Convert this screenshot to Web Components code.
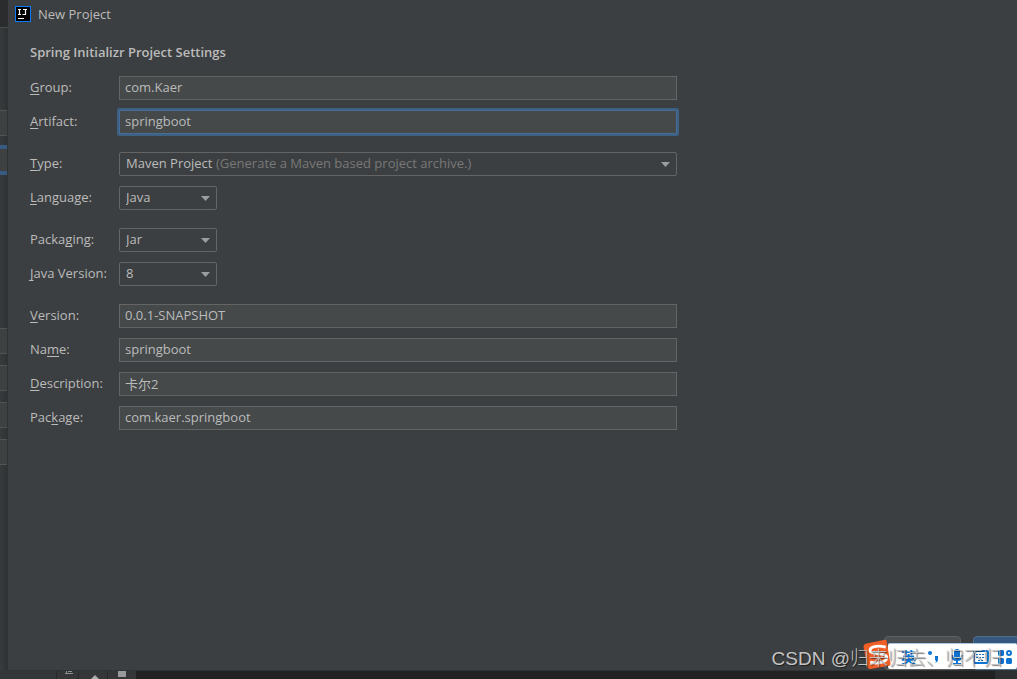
<!DOCTYPE html>
<html lang="en">
<head>
<meta charset="utf-8">
<title>New Project</title>
<style>
html,body{margin:0;height:100%;background:#2b2b2b}
body{font:13px/16px "Open Sans","Noto Sans CJK SC",sans-serif;color:#bbbbbb;overflow:hidden}
</style>
</head>
<body>
<desk-top>
  <backdrop-edge slot="edge"></backdrop-edge>
  <project-dialog heading="New Project">
    <h1 slot="title">Spring Initializr Project Settings</h1>
    <field-group>
      <text-row label="Group:" key="0" value="com.Kaer"></text-row>
      <text-row label="Artifact:" key="0" value="springboot" active></text-row>
    </field-group>
    <field-group>
      <select-row label="Type:" key="0" value="Maven Project" hint="(Generate a Maven based project archive.)" wide></select-row>
      <select-row label="Language:" key="0" value="Java"></select-row>
    </field-group>
    <field-group>
      <select-row label="Packaging:" key="5" value="Jar"></select-row>
      <select-row label="Java Version:" key="0" value="8"></select-row>
    </field-group>
    <field-group>
      <text-row label="Version:" key="0" value="0.0.1-SNAPSHOT"></text-row>
      <text-row label="Name:" key="2" value="springboot"></text-row>
      <text-row label="Description:" key="0" value="卡尔2"></text-row>
      <text-row label="Package:" key="3" value="com.kaer.springboot"></text-row>
    </field-group>
  </project-dialog>
  <status-edge slot="status"></status-edge>
  <ime-bar slot="float"></ime-bar>
  <water-mark slot="float">CSDN @归来归去、归不归</water-mark>
</desk-top>
<script>
const define = (name, html) => customElements.define(name, class extends HTMLElement {
  connectedCallback() {
    if (this.shadowRoot) return;
    this.attachShadow({mode: 'open'}).innerHTML = html(this);
  }
});
const at = (el, n) => el.getAttribute(n) || '';
const mnemonic = el => {
  const t = at(el, 'label'), i = +at(el, 'key');
  return t.slice(0, i) + '<u>' + t[i] + '</u>' + t.slice(i + 1);
};
const rowCss = `
:host{display:grid;grid-template-columns:89px minmax(0,558px);align-items:center}
label{white-space:nowrap;line-height:16px;padding-bottom:2px}
u{text-underline-offset:2px;text-decoration-thickness:1px;text-decoration-skip-ink:none}
input,select{font:inherit;color:inherit;margin:0;outline:0;box-sizing:border-box}`;

define('desk-top', () => `<style>
:host{display:grid;grid-template:minmax(0,1fr) 8px/8px minmax(0,1fr);height:100vh;position:relative}
slot[name=status]::slotted(*){grid-column:1/3}
</style><slot name="edge"></slot><slot></slot><slot name="status"></slot><slot name="float"></slot>`);

define('backdrop-edge', () => `<style>
:host{display:block;background:linear-gradient(90deg,#383b3d,#2f3233);overflow:hidden}
svg{display:block}
</style><svg width="8" height="671" aria-hidden="true">
<rect width="8" height="27" fill="#2a2c2d"/><rect y="27" width="8" height="1" fill="#484b4c"/>
<path d="M0 111h7v24H0zM0 149h7v23H0zM0 329h7v24H0zM0 366h7v24H0zM0 403h7v24H0zM0 440h7v24H0z" fill="#3e4141"/>
<path d="M0 110.500H7M0 135.500H7M0 328.500H7M0 353.500H7M0 365.500H7M0 390.500H7M0 402.500H7M0 427.500H7M0 439.500H7M0 464.500H7" stroke="#505354"/>
<path d="M0 145h7v4H0zM0 171h7v4H0z" fill="#365a80"/></svg>`);

define('status-edge', () => `<style>
:host{display:flex;background:#222;overflow:hidden}
.a{width:56px;background:#343739}.b{width:80px;background:#343638}.c{flex:1}.d{width:22px;background:#2e2f30}
svg{display:block}
</style><div class="a"></div><div class="b"><svg width="80" height="8" aria-hidden="true"><path d="M.500 0v8M22.500 0v8M51.500 0v8" stroke="#28292a"/><path d="M9 2.500h8M10.500 0v3M12 .500h4" stroke="#8d8f90" fill="none"/><path d="M39 4l4 4h-8z" fill="#aaa"/><path d="M62 0h8v6h-8z" fill="#999"/></svg></div><div class="c"></div><div class="d"></div>`);

define('project-dialog', el => `<style>
:host{display:flex;flex-direction:column;background:#3c3f41;overflow:hidden;border-bottom:1px solid #303335;box-sizing:border-box}
header{display:flex;align-items:center;gap:7px;height:28px;padding-left:7px}
main{padding:16px 22px 0;flex:1}
form{display:flex;flex-direction:column;gap:18px;margin-top:16px}
::slotted(h1){font-size:13px;line-height:16px;font-weight:600;margin:0}
footer{display:flex;justify-content:flex-end;gap:12px;margin-right:-33px}
button{box-sizing:border-box;width:77px;height:34px;font:inherit;color:inherit;background:#4c5052;border:1px solid #5e6060;border-radius:4px;margin:0}
button.next{background:#365880;border-color:#4c708c}
svg{display:block}
</style><header><svg width="16" height="16" aria-hidden="true"><rect width="16" height="16" fill="#087cfa"/><rect x="1" y="1" width="14" height="14" fill="#000"/><path d="M3 3.500h3M4.500 3v6M3 8.500h3M8 3.500h4M10.500 3v5.500H7.500" stroke="#fff" stroke-width="1.200" fill="none"/><path d="M3 12h6v1H3z" fill="#fff"/></svg><span>${at(el,'heading')}</span></header>
<main><slot name="title"></slot><form><slot></slot></form></main>
<footer><button type="button" aria-label="Previous"></button><button type="button" class="next" aria-label="Next"></button></footer>`);

define('field-group', () => `<style>:host{display:flex;flex-direction:column;gap:10px}</style><slot></slot>`);

define('text-row', el => `<style>${rowCss}
input{width:100%;height:24px;padding:0 5px 2px;background:#45494a;border:1px solid #646464}
:host([active]) input{border-color:#466d94;box-shadow:0 0 0 2px #3d6185;border-radius:1px}
</style><label for="f">${mnemonic(el)}</label><input id="f" type="text" value="${at(el,'value')}" spellcheck="false">`);

define('select-row', el => `<style>${rowCss}
.box{display:flex;align-items:center;box-sizing:border-box;width:98px;height:24px;padding:0 6px;border:1px solid #646464;border-radius:2px}
:host([wide]) .box{width:100%}
select{appearance:none;background:none;border:0;padding:0 0 2px;height:22px}
:host(:not([wide])) select{flex:1}
.hint{color:#787878;margin-left:3px;padding-bottom:2px;white-space:nowrap}
svg{margin-left:auto;flex:none}
</style><label for="f">${mnemonic(el)}</label><div class="box"><select id="f"><option>${at(el,'value')}</option></select>${at(el,'hint')?`<span class="hint">${at(el,'hint')}</span>`:''}<svg width="9" height="5" aria-hidden="true"><path d="M0 0h9L4.500 5z" fill="#9b9da0"/></svg></div>`);

define('ime-bar', () => `<style>
:host{position:absolute;right:0;bottom:10px;display:flex;align-items:flex-end}
svg{display:block}
.bar{display:flex;align-items:center;gap:9px;height:26px;box-sizing:border-box;padding:0 5px 0 13px;margin-left:-4px;background:#fff;color:#0f74d1;font:700 15px/20px "Noto Sans CJK SC",sans-serif;border-radius:2px;border-top:1px solid #a9c4e4}
.logo{z-index:1}
</style><svg class="logo" width="29" height="30" viewBox="0 0 29 31" aria-hidden="true"><path d="M2 5L21 1q3-1 3 2l4 22q0 3-3 3L7 31q-3 0-3-3L0 8q0-2 2-3z" fill="#f25f26"/><path d="M23 8.500C14 6 6 8 7 12.500c1 4 17 1 17 6.500 0 5-10 7-17 5" fill="none" stroke="#fff" stroke-width="3"/></svg>
<div class="bar"><span>英</span>
<svg width="16" height="18" aria-hidden="true"><circle cx="5" cy="5" r="2" fill="#0f74d1"/><path d="M10 8h3v4q0 2-3 3 2-2 0-3z" fill="#0f74d1"/></svg>
<svg width="14" height="18" aria-hidden="true"><rect x="4" y="1" width="6" height="10" rx="3" fill="#0f74d1"/><path d="M2 7q0 5 5 5t5-5M7 12v4M3 16h8" fill="none" stroke="#0f74d1" stroke-width="2"/></svg>
<svg width="16" height="14" aria-hidden="true"><rect x="1" y="1" width="14" height="12" rx="1" fill="none" stroke="#0f74d1" stroke-width="2"/><path d="M3 4.500h10M3 7.500h10M5 10.500h6" stroke="#0f74d1" stroke-dasharray="2 1"/></svg>
<svg width="14" height="14" aria-hidden="true"><path d="M1 0h4l1 1v4L5 6H1L0 5V1zM1 8h4l1 1v4l-1 1H1l-1-1V9zM9 8h4l1 1v4l-1 1H9l-1-1V9z" fill="#0f74d1"/><circle cx="11" cy="3" r="2" fill="none" stroke="#0f74d1" stroke-width="2"/></svg></div>`);

define('water-mark', () => `<style>
:host{position:absolute;right:15px;bottom:8px;z-index:2;font:300 19px/24px "Liberation Sans","Noto Sans CJK SC",sans-serif;color:#c4c4c4;text-shadow:1px 1px 1px #0008;white-space:nowrap;pointer-events:none}
</style><slot></slot>`);
</script>
</body>
</html>
